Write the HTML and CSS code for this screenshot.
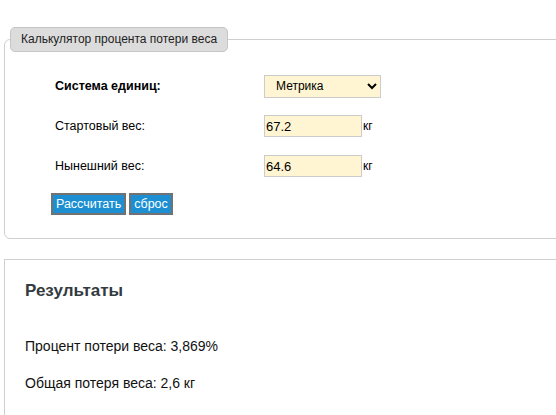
FILE: index.html
```html
<!DOCTYPE html>
<html lang="ru">
<head>
<meta charset="utf-8">
<title>Калькулятор процента потери веса</title>
<link rel="stylesheet" href="styles.css">
</head>
<body>
<fieldset class="calc">
  <legend class="calc-title">Калькулятор процента потери веса</legend>
  <div class="form-grid">
    <label class="label label-bold" for="units">Система единиц:</label>
    <div class="field">
      <select id="units" class="select">
        <option>Метрика</option>
        <option>Имперская</option>
      </select>
    </div>
    <label class="label" for="start">Стартовый вес:</label>
    <div class="field"><input id="start" class="input" type="text" value="67.2"><span class="unit">кг</span></div>
    <label class="label" for="now">Нынешний вес:</label>
    <div class="field"><input id="now" class="input" type="text" value="64.6"><span class="unit">кг</span></div>
  </div>
  <div class="buttons">
    <button class="btn" type="button">Рассчитать</button>
    <button class="btn" type="button">сброс</button>
  </div>
</fieldset>
<section class="results">
  <h3 class="results-title">Результаты</h3>
  <p class="result-line">Процент потери веса: 3,869%</p>
  <p class="result-line">Общая потеря веса: 2,6 кг</p>
</section>
</body>
</html>
```

FILE: styles.css
```css
html, body {
  margin: 0;
  padding: 0;
  background: #fff;
  overflow: hidden;
}
body {
  font-family: "Liberation Sans", Arial, sans-serif;
  font-size: 12px;
  color: #000;
  padding: 27px 0 0 4px;
  width: 700px;
  height: 415px;
  box-sizing: border-box;
}
.calc {
  margin: 0;
  width: 640px;
  box-sizing: border-box;
  border: 1px solid #cfcfcf;
  border-radius: 6px;
  padding: 0 5px 23px;
}
.calc-title {
  background: #dcdcdc;
  border: 1px solid #c6c6c6;
  border-radius: 5px;
  padding: 4px 10px;
  line-height: 15px;
  font-size: 12px;
  color: #222;
}
.form-grid {
  display: grid;
  grid-template-columns: 209px auto;
  grid-auto-rows: 22px;
  row-gap: 18px;
  align-items: center;
  padding: 23px 0 0 45px;
}
.label {
  line-height: 16px;
  font-size: 12.5px;
}
.label-bold {
  font-weight: bold;
}
.field {
  display: flex;
  align-items: center;
  height: 22px;
}
.select {
  width: 117px;
  height: 23px;
  box-sizing: border-box;
  background-color: #fff5d3;
  border: 1px solid #cccccc;
  border-radius: 0;
  font-family: "Liberation Sans", Arial, sans-serif;
  font-size: 12px;
  color: #000;
  padding: 0 3px 0 7px;
}
.input {
  width: 98px;
  height: 22px;
  box-sizing: border-box;
  background: #fff5d3;
  border: 1px solid #cccccc;
  border-radius: 0;
  font-family: "Liberation Sans", Arial, sans-serif;
  font-size: 13px;
  color: #000;
  padding: 1px 1px;
  margin: 0;
}
.unit {
  font-size: 12px;
  padding-left: 1px;
}
.buttons {
  display: flex;
  gap: 3px;
  padding: 16px 0 0 41px;
}
.btn {
  background: #1b8fd2;
  color: #fff;
  border: 2px solid #727272;
  border-radius: 0;
  height: 22px;
  box-sizing: border-box;
  padding: 0 3px;
  font-family: "Liberation Sans", Arial, sans-serif;
  font-size: 12.5px;
  line-height: 18px;
}
.results {
  margin-top: 20px;
  width: 640px;
  height: 200px;
  box-sizing: border-box;
  border: 1px solid #cfcfcf;
  border-right: none;
  padding: 20px 20px;
}
.results-title {
  margin: 0;
  font-size: 17px;
  line-height: 22px;
  color: #333a40;
  font-weight: bold;
}
.result-line {
  margin: 0;
  font-size: 14px;
  line-height: 18px;
  color: #111;
}
.results-title + .result-line {
  margin-top: 35px;
}
.result-line + .result-line {
  margin-top: 19px;
}
```
